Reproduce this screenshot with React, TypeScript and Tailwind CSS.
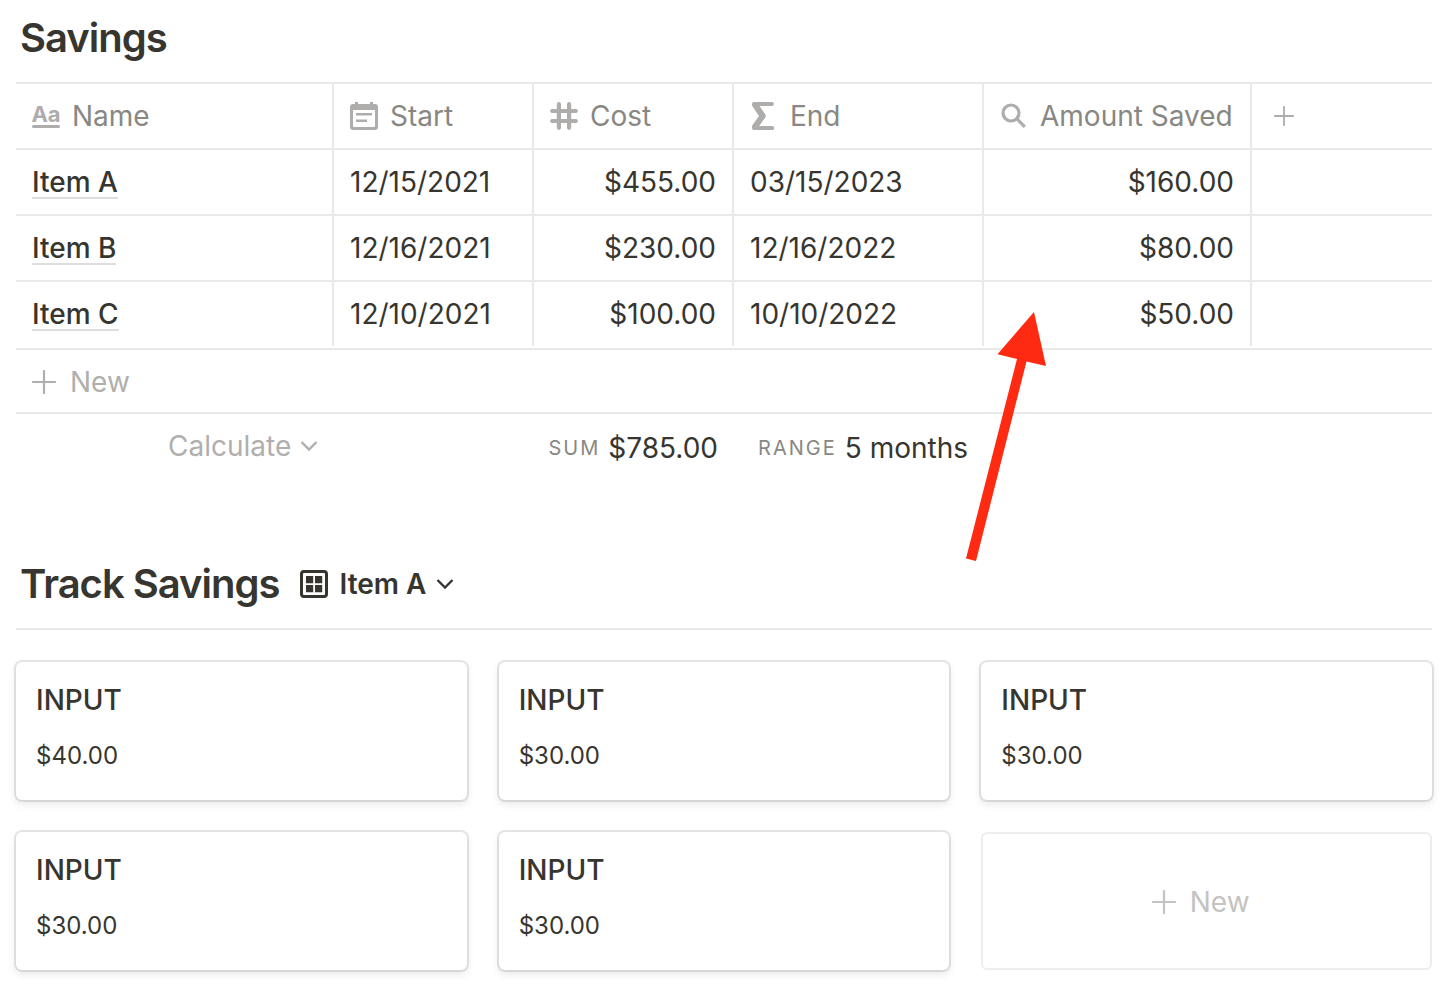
import { useState, type ReactNode } from "react"

const items = [
  { name: "Item A", start: "12/15/2021", cost: "$455.00", end: "03/15/2023", saved: "$160.00" },
  { name: "Item B", start: "12/16/2021", cost: "$230.00", end: "12/16/2022", saved: "$80.00" },
  { name: "Item C", start: "12/10/2021", cost: "$100.00", end: "10/10/2022", saved: "$50.00" },
]

const inputs = ["$40.00", "$30.00", "$30.00", "$30.00", "$30.00"]

function TitleIcon() {
  return (
    <span aria-hidden="true" className="flex w-7 flex-col items-center gap-px">
      <span className="text-[22px] leading-5 font-bold">Aa</span>
      <span className="h-[3px] w-full rounded-full bg-current" />
    </span>
  )
}

function DateIcon() {
  return (
    <svg viewBox="0 0 28 28" className="size-7" fill="currentColor" aria-hidden="true">
      <path
        fillRule="evenodd"
        d="M5 0h3v2h12V0h3v2h2a3 3 0 0 1 3 3v20a3 3 0 0 1-3 3H3a3 3 0 0 1-3-3V5a3 3 0 0 1 3-3h2zM3 8v16a1 1 0 0 0 1 1h20a1 1 0 0 0 1-1V8z"
      />
      <path d="M6 11h16v2.600H6zM6 17.400h11V20H6z" />
    </svg>
  )
}

function NumberIcon() {
  return (
    <svg viewBox="0 0 28 28" className="size-7" fill="none" stroke="currentColor" strokeWidth="4.200" strokeLinecap="round" aria-hidden="true">
      <path d="M8.900 2.200v23.600M19.100 2.200v23.600M2.200 9h23.600M2.200 19h23.600" />
    </svg>
  )
}

function FormulaIcon() {
  return (
    <svg viewBox="0 0 28 28" className="size-7" fill="currentColor" aria-hidden="true">
      <path d="M4 0h18a1.800 1.800 0 0 1 1.800 2 1.900 1.900 0 0 1-1.800 2.100H9.600l5.800 8.400a2.500 2.500 0 0 1 0 2.700L9.200 23.900H22a1.900 1.900 0 0 1 2 2.100 1.800 1.800 0 0 1-2 2H4a2 2 0 0 1-2-2v-1.400c0-.6.200-1 .5-1.500L9 14 2.600 4.500C2.200 4 2 3.500 2 3V2a2 2 0 0 1 2-2z" />
    </svg>
  )
}

function SearchIcon() {
  return (
    <svg viewBox="0 0 28 28" className="size-7" fill="none" stroke="currentColor" strokeWidth="3.200" aria-hidden="true">
      <circle cx="11" cy="11" r="8" />
      <path d="M16.500 16.500l8.300 8.300" />
    </svg>
  )
}

function GalleryIcon() {
  return (
    <svg viewBox="0 0 28 28" className="size-7" fill="currentColor" aria-hidden="true">
      <rect x="1.500" y="1.500" width="25" height="25" rx="2.500" fill="none" stroke="currentColor" strokeWidth="3" />
      <path d="M6 6h7.200v7.200H6zM15 6h7.200v7.200H15zM6 15h7.200v7.200H6zM15 15h7.200v7.200H15z" />
    </svg>
  )
}

function PlusIcon({ className }: { className: string }) {
  return (
    <svg viewBox="0 0 24 24" className={className} stroke="currentColor" strokeWidth="2.200" strokeLinecap="round" aria-hidden="true">
      <path d="M12 1v22M1 12h22" />
    </svg>
  )
}

function Chevron() {
  return (
    <svg
      viewBox="0 0 18 12"
      className="pointer-events-none col-start-1 row-start-1 h-3 w-[18px] justify-self-end"
      fill="none"
      stroke="currentColor"
      strokeWidth="2.400"
      aria-hidden="true"
    >
      <path d="M1.500 2l7.500 7.600L16.500 2" />
    </svg>
  )
}

function Dropdown({
  label,
  value,
  options,
  onChange,
}: {
  label: string
  value: string
  options: string[]
  onChange: (value: string) => void
}) {
  return (
    <span className="grid items-center">
      <select
        aria-label={label}
        value={value}
        onChange={(e) => onChange(e.target.value)}
        className="col-start-1 row-start-1 h-10 appearance-none bg-transparent pr-[26px]"
      >
        {options.map((option) => (
          <option key={option}>{option}</option>
        ))}
      </select>
      <Chevron />
    </span>
  )
}

function Column({ icon, children }: { icon: ReactNode; children: ReactNode }) {
  return (
    <th scope="col" className="border-r-2 border-b-2 border-[#e9e9e7] px-4 text-left font-normal">
      <span className="flex items-center gap-3 whitespace-nowrap">
        <span className="text-[#aeadab]">{icon}</span>
        {children}
      </span>
    </th>
  )
}

export default function App() {
  const [calc, setCalc] = useState("Calculate")
  const [view, setView] = useState("Item A")

  return (
    <main className="relative bg-white pt-[14px] pr-[22px] pb-9 pl-4 font-['Inter','Liberation_Sans',sans-serif] text-[28px] leading-8 text-[#37352f]">
      <h1 className="ml-1 text-[40px] leading-[48px] font-semibold tracking-tight">Savings</h1>

      <table className="mt-5 w-full table-fixed border-separate border-spacing-0 border-t-2 border-[#e9e9e7]">
        <colgroup>
          <col className="w-[318px]" />
          <col className="w-[200px]" />
          <col className="w-[200px]" />
          <col className="w-[250px]" />
          <col className="w-[268px]" />
          <col />
        </colgroup>
        <thead>
          <tr className="h-[66px] text-[#888783]">
            <Column icon={<TitleIcon />}>Name</Column>
            <Column icon={<DateIcon />}>Start</Column>
            <Column icon={<NumberIcon />}>Cost</Column>
            <Column icon={<FormulaIcon />}>End</Column>
            <Column icon={<SearchIcon />}>Amount Saved</Column>
            <td className="border-b-2 border-[#e9e9e7] px-[22px]">
              <button type="button" aria-label="Add a property" className="flex text-[#aeadab]">
                <PlusIcon className="size-5" />
              </button>
            </td>
          </tr>
        </thead>
        <tbody>
          {items.map((item) => (
            <tr
              key={item.name}
              className="h-[66px] *:border-b-2 *:border-[#e9e9e7] *:px-4 *:not-last:border-r-2 last:h-16 last:*:border-b-0"
            >
              <td>
                <a href="#" className="inline-block border-b-2 border-[#dededc] leading-[30px] font-medium">
                  {item.name}
                </a>
              </td>
              <td>{item.start}</td>
              <td className="text-right">{item.cost}</td>
              <td>{item.end}</td>
              <td className="text-right">{item.saved}</td>
              <td />
            </tr>
          ))}
        </tbody>
      </table>

      <button
        type="button"
        className="mt-0.5 flex h-[66px] w-full items-center gap-[14px] border-y-2 border-[#e9e9e7] px-4 pt-0.5 text-[#b0afad]"
      >
        <PlusIcon className="size-6" />
        New
      </button>

      <div className="flex h-16 items-center">
        <div className="flex w-[318px] justify-end pr-4 text-[#b0afad]">
          <Dropdown label="Calculate column" value={calc} options={["Calculate", "Count all"]} onChange={setCalc} />
        </div>
        <div className="flex w-[400px] items-center justify-end gap-2 pt-1 pr-4">
          <span className="text-[20px] tracking-widest text-[#888783]">SUM</span>
          <span>$785.00</span>
        </div>
        <div className="flex w-[250px] items-center justify-end gap-2 pt-1 pr-4 whitespace-nowrap">
          <span className="text-[20px] tracking-widest text-[#888783]">RANGE</span>
          <span>5 months</span>
        </div>
      </div>

      <div className="mt-[82px] flex items-center border-b-2 border-[#e9e9e7] pb-5">
        <h2 className="ml-1 text-[40px] leading-[48px] font-semibold tracking-tight">Track Savings</h2>
        <div className="ml-5 flex items-center gap-3 font-semibold">
          <GalleryIcon />
          <Dropdown label="View" value={view} options={items.map((item) => item.name)} onChange={setView} />
        </div>
      </div>

      <div className="mt-8 grid grid-cols-3 gap-8">
        {inputs.map((amount, i) => (
          <article
            key={i}
            className="h-[138px] rounded-md px-5 pt-[22px] shadow-[0_0_0_2px_rgba(15,15,15,0.1),0_4px_8px_rgba(15,15,15,0.1)]"
          >
            <h3 className="font-medium">INPUT</h3>
            <p className="mt-6 text-[24px]">{amount}</p>
          </article>
        ))}
        <button
          type="button"
          className="flex h-[138px] items-center justify-center gap-[14px] rounded-md border-2 border-[#ededec] pt-0.5 pr-3 text-[#c4c3c1]"
        >
          <PlusIcon className="size-6" />
          New
        </button>
      </div>

      {/* callout arrow pointing at the Amount Saved column */}
      <svg
        viewBox="0 0 80 250"
        className="pointer-events-none absolute top-[312px] left-[966px] h-[250px] w-20"
        fill="#ff2a12"
        aria-hidden="true"
      >
        <path d="M68 0l12 54-19.500-4.500L10 249l-10-2.400L51 47l-19.500-4.800z" />
      </svg>
    </main>
  )
}
